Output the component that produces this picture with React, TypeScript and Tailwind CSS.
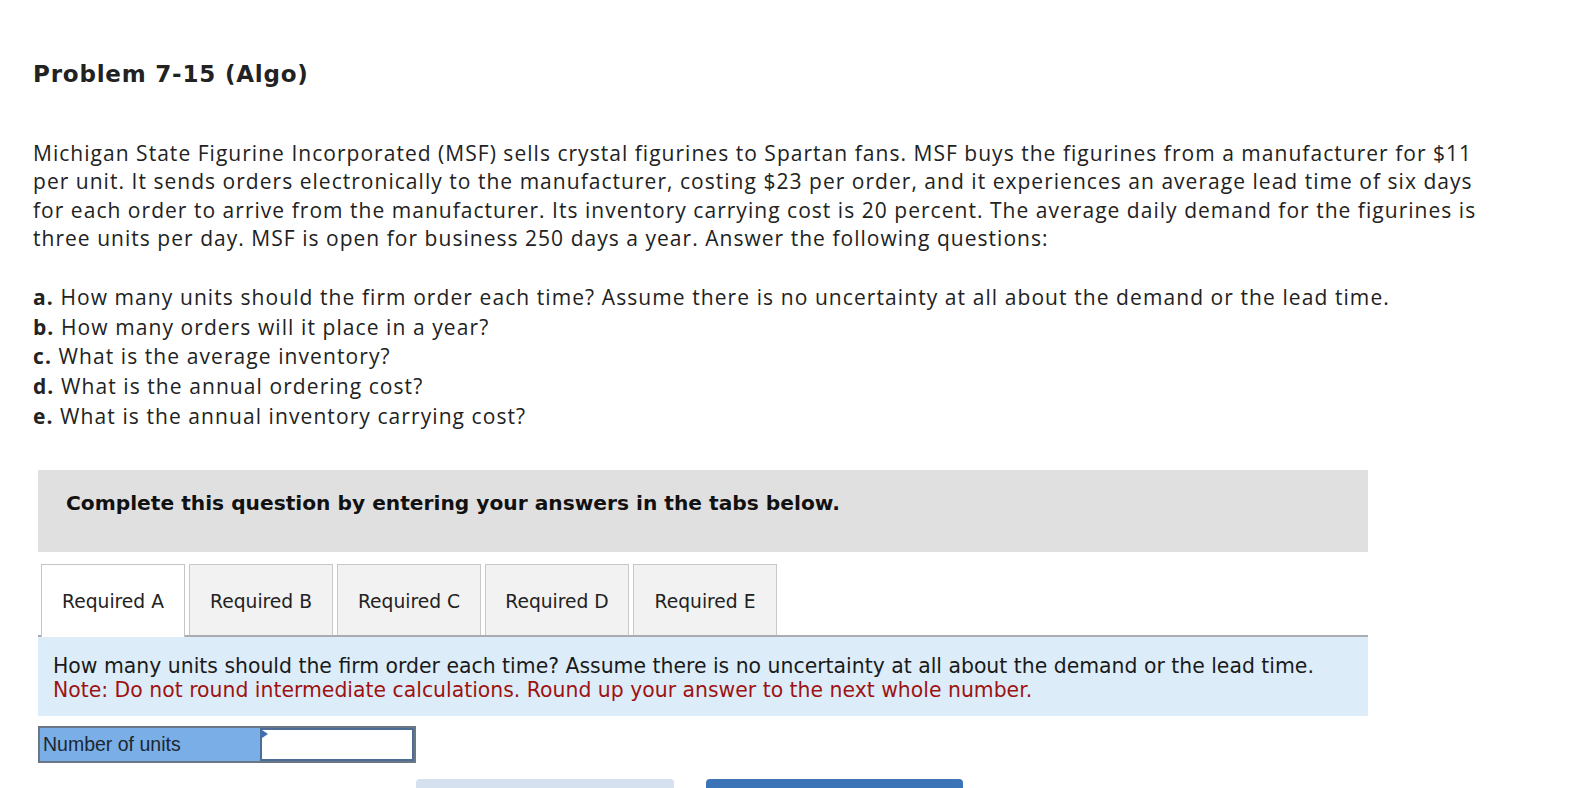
const body = { fontFamily: '"Open Sans", "Noto Sans", sans-serif' };
const verdana = { fontFamily: '"DejaVu Sans", Verdana, sans-serif' };

const tabs = ["Required A", "Required B", "Required C", "Required D", "Required E"];

const questions: [string, string][] = [
  ["a.", "How many units should the firm order each time? Assume there is no uncertainty at all about the demand or the lead time."],
  ["b.", "How many orders will it place in a year?"],
  ["c.", "What is the average inventory?"],
  ["d.", "What is the annual ordering cost?"],
  ["e.", "What is the annual inventory carrying cost?"],
];

export default function App() {
  const active = 0;

  return (
    <div className="h-[788px] w-[1588px] overflow-hidden bg-white pl-[33px] text-[#222]">
      {/* Heading */}
      <h1
        className="pt-[60px] text-[23px] font-bold leading-[28px] tracking-[0.8px] text-[#222]"
        style={verdana}
      >
        Problem 7-15 (Algo)
      </h1>

      {/* Problem statement */}
      <p
        className="mt-[51px] whitespace-nowrap text-[21px] leading-[28.4px] tracking-[1.03px]"
        style={body}
      >
        Michigan State Figurine Incorporated (MSF) sells crystal figurines to Spartan fans. MSF buys the figurines from a manufacturer for $11
        <br />
        per unit. It sends orders electronically to the manufacturer, costing $23 per order, and it experiences an average lead time of six days
        <br />
        for each order to arrive from the manufacturer. Its inventory carrying cost is 20 percent. The average daily demand for the figurines is
        <br />
        three units per day. MSF is open for business 250 days a year. Answer the following questions:
      </p>

      <ul
        className="mt-[30.6px] whitespace-nowrap text-[21px] leading-[29.6px] tracking-[1.08px]"
        style={body}
      >
        {questions.map(([letter, text]) => (
          <li key={letter}>
            <span className="font-bold">{letter}</span> {text}
          </li>
        ))}
      </ul>

      <div className="ml-[5px] w-[1330px]">
        {/* Instructions */}
        <div className="mt-[38.5px] h-[82px] bg-[#e0e0e0] pl-[28px] pt-[21px]">
          <p className="text-[20.2px] font-bold leading-[24px] text-[#111]" style={verdana}>
            Complete this question by entering your answers in the tabs below.
          </p>
        </div>

        {/* Tabs */}
        <div className="mt-[12px] flex gap-[4px] border-b-2 border-[#a9adb2] pl-[3px]">
          {tabs.map((t, i) => (
            <button
              key={t}
              className={
                i === active
                  ? "-mb-[2px] flex h-[73px] w-[144px] items-center justify-center border border-b-0 border-[#c4c4c4] bg-white pt-[2px] text-[18.7px] text-[#222]"
                  : "flex h-[71px] w-[144px] items-center justify-center border border-b-0 border-[#c8c8c8] bg-[#f2f2f2] pt-[4px] text-[18.7px] text-[#222]"
              }
              style={verdana}
            >
              {t}
            </button>
          ))}
        </div>

        {/* Question panel */}
        <div className="h-[79px] bg-[#dcedf9] pl-[15px] pt-[17.5px]" style={verdana}>
          <p className="whitespace-nowrap text-[20.4px] leading-[24px] text-[#1a1a1a]">
            How many units should the firm order each time? Assume there is no uncertainty at all about the demand or the lead time.
          </p>
          <p className="whitespace-nowrap text-[20.4px] leading-[24px] text-[#9e1212]">
            Note: Do not round intermediate calculations. Round up your answer to the next whole number.
          </p>
        </div>

        {/* Answer row */}
        <div className="mt-[10px] flex h-[37px] w-[378px] border-2 border-[#6b7785]">
          <div
            className="flex w-[220px] items-center bg-[#7aaee6] pl-[3px] text-[19.5px] text-[#1c2733]"
            style={{ fontFamily: '"Liberation Sans", Arial, sans-serif' }}
          >
            Number of units
          </div>
          <div className="relative flex-1 border-2 border-[#4c6d96] bg-white">
            <span className="absolute left-0 top-0 h-0 w-0 border-y-[4px] border-l-[6px] border-y-transparent border-l-[#3b6fb3]" />
          </div>
        </div>

        {/* Navigation buttons */}
        <div className="ml-[378px] mt-[16px] flex gap-[32px]">
          <div className="h-[44px] w-[258px] rounded-[4px] bg-[#d5e1ef]" />
          <div className="h-[44px] w-[257px] rounded-[4px] bg-[#3b74b7]" />
        </div>
      </div>
    </div>
  );
}
